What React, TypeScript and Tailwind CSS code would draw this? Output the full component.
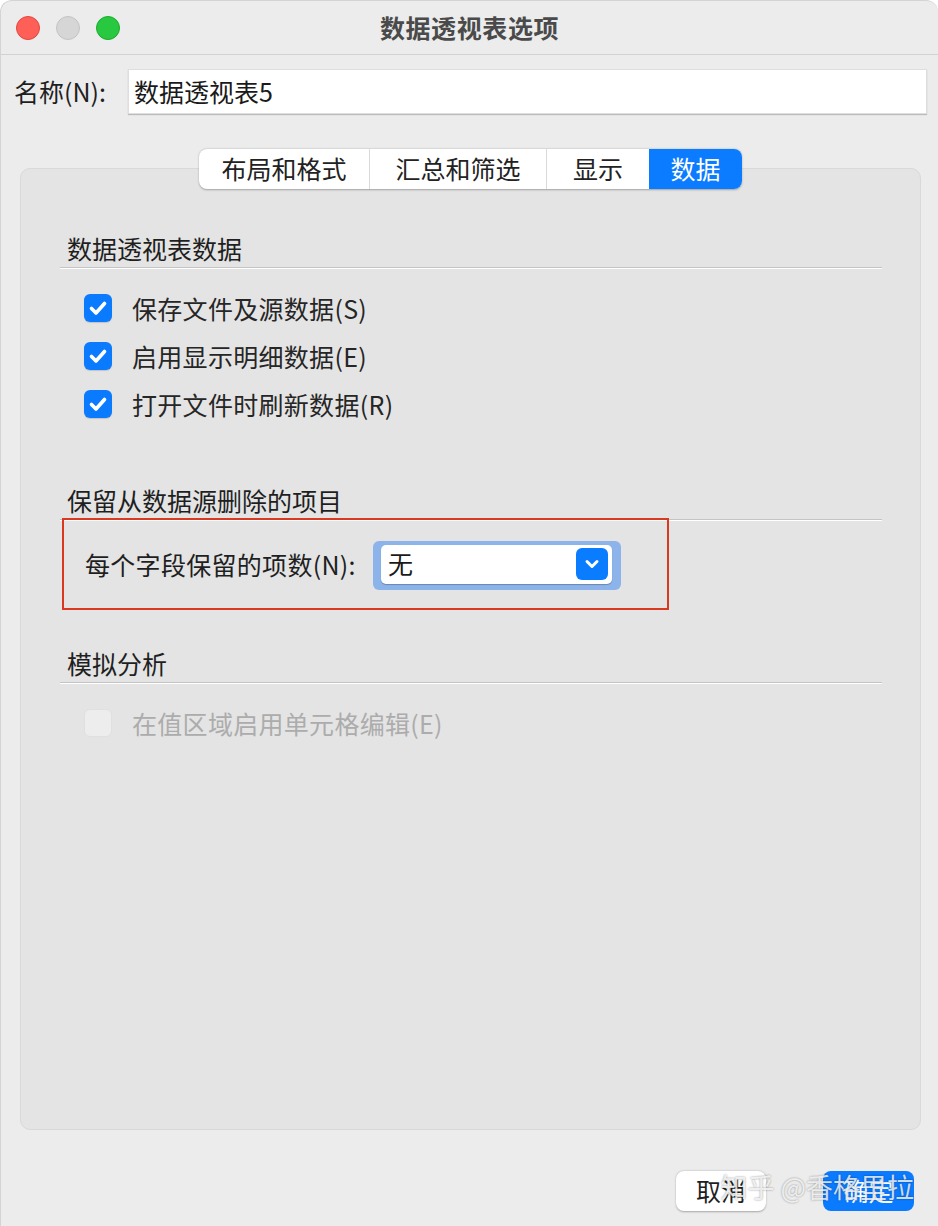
const font = "font-['Noto_Sans_CJK_SC','Noto_Sans',sans-serif]";

function CheckIcon() {
  return (
    <svg viewBox="0 0 28 28" className="h-[28px] w-[28px]">
      <path
        d="M7.5 14.5 L12 19 L20.5 9.5"
        fill="none"
        stroke="white"
        strokeWidth="3.6"
        strokeLinecap="round"
        strokeLinejoin="round"
      />
    </svg>
  );
}

function Checkbox({ label, checked = true, disabled = false }: { label: string; checked?: boolean; disabled?: boolean }) {
  return (
    <div className="flex h-[48px] items-center gap-[20px] pl-[24px]">
      {checked ? (
        <div className="flex h-[28px] w-[28px] items-center justify-center rounded-[6px] bg-[#0a7aff] shadow-[0_1px_1px_rgba(0,0,0,0.15)]">
          <CheckIcon />
        </div>
      ) : (
        <div className="h-[28px] w-[28px] rounded-[6px] border border-[#e0e0e0] bg-[#ededed]" />
      )}
      <span className={`text-[25px] leading-none tracking-[0.3px] ${disabled ? "text-[#acacac]" : "text-[#262626]"}`}>
        {label}
      </span>
    </div>
  );
}

function SectionTitle({ children }: { children: string }) {
  return (
    <div className="border-b border-[#c4c4c4] shadow-[0_1px_0_#ffffff]">
      <div className="flex h-[36px] items-center pl-[7px] text-[25px] text-[#1f1f1f]">{children}</div>
    </div>
  );
}

export default function App() {
  const tabs = ["布局和格式", "汇总和筛选", "显示", "数据"];
  const tabWidths = ["w-[170px]", "w-[177px]", "w-[103px]", "w-[93px]"];

  return (
    <div className={`h-[1226px] w-[938px] overflow-hidden bg-white ${font}`}>
      <div className="relative flex h-full flex-col rounded-t-[12px] border-l border-t border-[#d4d4d4] bg-[#ececec]">
        {/* title bar */}
        <div className="grid h-[54px] grid-cols-[1fr_auto_1fr] items-center border-b border-[#d2d2d2]">
          <div className="flex items-center gap-[16px] pl-[15px]">
            <span className="h-[24px] w-[24px] rounded-full border border-[#e2463f] bg-[#fe5f57]" />
            <span className="h-[24px] w-[24px] rounded-full border border-[#c4c4c4] bg-[#d6d6d6]" />
            <span className="h-[24px] w-[24px] rounded-full border border-[#1aab29] bg-[#28c840]" />
          </div>
          <div className="text-[25px] font-bold tracking-[0.6px] text-[#4a4a4a]">数据透视表选项</div>
          <div />
        </div>

        {/* name */}
        <div className="mt-[14px] flex items-center pl-[13px] pr-[11px]">
          <span className="w-[114px] text-[25px] text-[#1f1f1f]">名称(N):</span>
          <div className="flex h-[45px] flex-1 items-center border border-[#dedede] bg-white pl-[5px] text-[25px] text-[#1a1a1a] shadow-[0_1px_1px_rgba(0,0,0,0.2)]">
            数据透视表5
          </div>
        </div>

        {/* tabs + panel */}
        <div className="mt-[35px] flex flex-col pl-[19px] pr-[17px]">
          <div className="relative z-10 flex justify-center">
            <div className="flex h-[40px] rounded-[8px] bg-white shadow-[0_0.5px_2px_rgba(0,0,0,0.3)]">
              {tabs.map((t, i) => (
                <div
                  key={t}
                  className={`flex items-center justify-center text-[25px] ${tabWidths[i]} ${
                    i === 3
                      ? "rounded-r-[8px] bg-[#0b7bff] text-white"
                      : "text-[#222222]"
                  } ${i > 0 && i < 3 ? "border-l border-[#dadada]" : ""}`}
                >
                  {t}
                </div>
              ))}
            </div>
          </div>

          <div className="-mt-[21px] h-[962px] rounded-[10px] border border-[#d9d9d9] bg-[#e4e4e4] pl-[39px] pr-[38px] pt-[62px]">
            <SectionTitle>数据透视表数据</SectionTitle>
            <div className="mt-[16px]">
              <Checkbox label="保存文件及源数据(S)" />
              <Checkbox label="启用显示明细数据(E)" />
              <Checkbox label="打开文件时刷新数据(R)" />
            </div>

            <div className="mt-[55px]">
              <SectionTitle>保留从数据源删除的项目</SectionTitle>
            </div>
            <div className="relative flex h-[90px] items-center gap-[13px] pl-[25px]">
              <span className="w-[275px] text-[25px] tracking-[0.3px] text-[#1f1f1f]">每个字段保留的项数(N):</span>
              <div className="rounded-[6px] bg-[#8db4ea] pb-[6px] pl-[8px] pr-[9px] pt-[4px]">
                <div className="flex h-[39px] w-[231px] items-center justify-between rounded-[5px] bg-white pl-[7px] pr-[4px] shadow-[0_1px_1px_rgba(0,0,0,0.25)]">
                  <span className="text-[25px] text-[#1a1a1a]">无</span>
                  <div className="flex h-[32px] w-[32px] items-center justify-center rounded-[6px] bg-[#0a7cff]">
                    <svg viewBox="0 0 32 32" className="h-[32px] w-[32px]">
                      <path d="M11 13.5 L16 18.5 L21 13.5" fill="none" stroke="white" strokeWidth="3" strokeLinecap="round" strokeLinejoin="round" />
                    </svg>
                  </div>
                </div>
              </div>
              <div className="pointer-events-none absolute -top-[2px] left-[2px] h-[92px] w-[607px] border-2 border-[#d8391f]" />
            </div>

            <div className="mt-[36px]">
              <SectionTitle>模拟分析</SectionTitle>
            </div>
            <div className="mt-[16px]">
              <Checkbox label="在值区域启用单元格编辑(E)" checked={false} disabled />
            </div>
          </div>
        </div>

        {/* buttons */}
        <div className="relative mt-[41px] flex justify-end gap-[57px] pr-[24px]">
          <div className="flex h-[40px] w-[90px] items-center justify-center rounded-[8px] bg-white text-[25px] text-[#1f1f1f] shadow-[0_0.5px_2px_rgba(0,0,0,0.3)]">
            取消
          </div>
          <div className="flex h-[40px] w-[91px] items-center justify-center rounded-[8px] bg-[#0a7aff] text-[25px] text-white">
            确定
          </div>
          <div className="pointer-events-none absolute right-[24px] top-[-4px] text-[27px] text-white/80 [text-shadow:0_0_2px_rgba(0,0,0,0.45)]">
            知乎 @香格里拉
          </div>
        </div>
      </div>
    </div>
  );
}
